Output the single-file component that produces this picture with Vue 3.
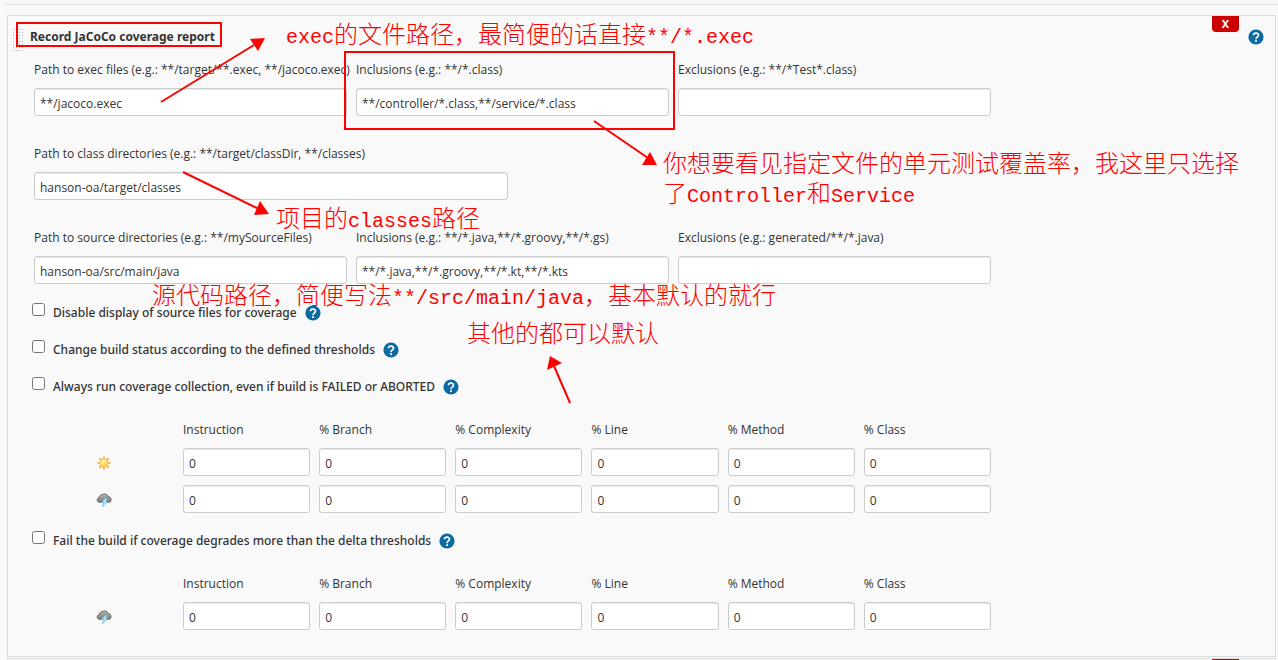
<script setup>
import { ref } from 'vue'

const fieldRows = ref([
  [
    { id: 'exec', label: 'Path to exec files (e.g.: **/target/**.exec, **/jacoco.exec)', value: '**/jacoco.exec' },
    { id: 'class-inc', label: 'Inclusions (e.g.: **/*.class)', value: '**/controller/*.class,**/service/*.class' },
    { id: 'class-exc', label: 'Exclusions (e.g.: **/*Test*.class)', value: '' },
  ],
  [
    { id: 'classes', label: 'Path to class directories (e.g.: **/target/classDir, **/classes)', value: 'hanson-oa/target/classes' },
  ],
  [
    { id: 'sources', label: 'Path to source directories (e.g.: **/mySourceFiles)', value: 'hanson-oa/src/main/java' },
    { id: 'src-inc', label: 'Inclusions (e.g.: **/*.java,**/*.groovy,**/*.gs)', value: '**/*.java,**/*.groovy,**/*.kt,**/*.kts' },
    { id: 'src-exc', label: 'Exclusions (e.g.: generated/**/*.java)', value: '' },
  ],
])

const columns = ['Instruction', '% Branch', '% Complexity', '% Line', '% Method', '% Class']

const zeros = () => columns.map(() => '0')

const groups = ref([
  {
    id: 'thresholds',
    checks: [
      { id: 'hide-sources', label: 'Disable display of source files for coverage', on: false },
      { id: 'build-status', label: 'Change build status according to the defined thresholds', on: false },
      { id: 'always-run', label: 'Always run coverage collection, even if build is FAILED or ABORTED', on: false },
    ],
    rows: [
      { icon: 'sun', values: zeros() },
      { icon: 'storm', values: zeros() },
    ],
  },
  {
    id: 'delta',
    checks: [
      { id: 'fail-delta', label: 'Fail the build if coverage degrades more than the delta thresholds', on: false },
    ],
    rows: [{ icon: 'storm', values: zeros() }],
  },
])

// Each note is a list of lines; each line is a list of [script, text] runs.
const notes = [
  { id: 'n-exec', lines: [[['en', 'exec'], ['zh', '的文件路径，最简便的话直接'], ['en', '**/*.exec']]] },
  { id: 'n-filter', lines: [
    [['zh', '你想要看见指定文件的单元测试覆盖率，我这里只选择']],
    [['zh', '了'], ['en', 'Controller'], ['zh', '和'], ['en', 'Service']],
  ] },
  { id: 'n-classes', lines: [[['zh', '项目的'], ['en', 'classes'], ['zh', '路径']]] },
  { id: 'n-source', lines: [[['zh', '源代码路径，简便写法'], ['en', '**/src/main/java'], ['zh', '，基本默认的就行']]] },
  { id: 'n-rest', lines: [[['zh', '其他的都可以默认']]] },
]
</script>

<template>
  <main class="page">
    <svg class="defs" width="0" height="0" aria-hidden="true">
      <defs>
        <radialGradient id="sunFill" cx="40%" cy="38%" r="65%">
          <stop offset="0" stop-color="#fff6b8" />
          <stop offset="1" stop-color="#fbc93a" />
        </radialGradient>
        <linearGradient id="cloudFill" x1="0" y1="0" x2="0" y2="1">
          <stop offset="0" stop-color="#b4b4b2" />
          <stop offset="1" stop-color="#7c7c7a" />
        </linearGradient>
        <symbol id="help" viewBox="0 0 16 16">
          <circle cx="8" cy="8" r="7.6" fill="#0b6aa2" />
          <path d="M5.500 6.300C5.500 3.300 10.500 3.300 10.500 6.200C10.500 7.900 8 8 8 10.200" fill="none" stroke="#fff" stroke-width="1.700" />
          <rect x="7.100" y="11.200" width="1.800" height="1.800" fill="#fff" />
        </symbol>
        <symbol id="sun" viewBox="0 0 16 16">
          <path d="M8 1.400V14.600M1.400 8H14.600M3.300 3.300L12.700 12.700M12.700 3.300L3.300 12.700" stroke="#f5a83c" stroke-width="1.700" />
          <circle cx="8" cy="8" r="4.300" fill="url(#sunFill)" stroke="#f7b545" stroke-width=".7" />
        </symbol>
        <symbol id="storm" viewBox="0 0 16 16">
          <path d="M3.200 10.200C.6 9.900.6 6.300 3 5.800C3.300 3.500 5.400 2.300 6.800 2.400C8.800 1.200 11.600 2.400 12 4.400C14.400 4.400 15.900 7.400 14.600 9.300C14 10.300 13 10.200 12.400 10.200Z" fill="url(#cloudFill)" stroke="#5c5c5a" stroke-width=".9" />
          <path d="M8.700 6.700L5.800 10.600H7.800L6.300 15L11.400 9.600H9.500L11.200 6.700Z" fill="#b4e6fd" stroke="#6cc4f4" stroke-width=".8" />
        </symbol>
      </defs>
    </svg>

    <section class="panel">
      <header class="head">
        <span class="grip"></span>
        <h2 class="title">Record JaCoCo coverage report</h2>
        <button class="remove" type="button" aria-label="Remove">X</button>
        <button class="help" type="button" aria-label="Help"><svg><use href="#help" /></svg></button>
      </header>

      <form class="body">
        <div
          v-for="(row, i) in fieldRows"
          :key="i"
          class="fields"
          :class="{ pair: row.length === 1 }"
        >
          <div v-for="f in row" :key="f.id" class="field">
            <label :for="f.id">{{ f.label }}</label>
            <input :id="f.id" v-model="f.value" class="box" type="text" />
          </div>
        </div>

        <div v-for="g in groups" :key="g.id" class="group">
          <div v-for="c in g.checks" :key="c.id" class="check">
            <input :id="c.id" v-model="c.on" class="tick" type="checkbox" />
            <label :for="c.id">{{ c.label }}</label>
            <button class="help" type="button" aria-label="Help"><svg><use href="#help" /></svg></button>
          </div>
          <table class="limits">
            <thead>
              <tr>
                <td class="state"></td>
                <th v-for="c in columns" :key="c" scope="col">{{ c }}</th>
              </tr>
            </thead>
            <tbody>
              <tr v-for="(r, ri) in g.rows" :key="ri">
                <td class="state"><svg><use :href="'#' + r.icon" /></svg></td>
                <td v-for="(c, ci) in columns" :key="c">
                  <input v-model="r.values[ci]" class="box" type="text" :aria-label="c" />
                </td>
              </tr>
            </tbody>
          </table>
        </div>
      </form>
    </section>

    <section class="panel">
      <header class="head">
        <button class="remove" type="button" aria-label="Remove"></button>
        <button class="help" type="button" aria-label="Help"><svg><use href="#help" /></svg></button>
      </header>
    </section>

    <svg class="marks" aria-hidden="true">
      <g fill="none" stroke="#fe0000" stroke-width="2">
        <rect x="17" y="23" width="204" height="23" />
        <rect x="345" y="52" width="329" height="77" />
        <path d="M161 102L254 45M594 121L648 158M183 172L259 209M570 403L554 366" />
      </g>
      <g fill="#fe0000">
        <path d="M265 38L250 39L258 51Z" />
        <path d="M657 165L650 152L642 165Z" />
        <path d="M269 214L260 201L254 215Z" />
        <path d="M550 356L547 370L562 363Z" />
      </g>
    </svg>

    <p v-for="n in notes" :key="n.id" class="note" :class="n.id">
      <span v-for="(line, li) in n.lines" :key="li" class="line"><span v-for="(run, ri) in line" :key="ri" :class="run[0]">{{ run[1] }}</span></span>
    </p>
  </main>
</template>

<style>
body {
  margin: 0;
  background: #f9f9f9;
}
</style>

<style scoped>
.page {
  position: relative;
  box-sizing: border-box;
  height: 100vh;
  overflow: hidden;
  padding: 4px 2px 0 7px;
  background: #f9f9f9;
  color: #333;
  font: 12px/18px "Open Sans", "Noto Sans", sans-serif;
}
.page::before {
  content: "";
  display: block;
  height: 1px;
  margin: 0 -2px 10px;
  background: #dcdcdc;
}
.defs {
  position: absolute;
}
.panel {
  border: 1px solid #dcdcdc;
  margin-bottom: 1px;
}
.head {
  display: flex;
  align-items: flex-start;
  height: 45px;
  padding: 0 11px 0 4px;
}
.grip {
  width: 12px;
  height: 24px;
  margin: 12px 6px 0 0;
  background: radial-gradient(circle, #b8b8b8 1px, transparent 1px) 0 0 / 3px 3px;
}
.title {
  flex: 1;
  margin: 12px 0 0;
  font: bold 12px/18px "Noto Sans", sans-serif;
}
.remove {
  width: 27px;
  height: 16px;
  margin-left: auto;
  padding: 0;
  border: 0;
  border-radius: 0 0 4px 4px;
  background: #c00;
  color: #fff;
  font: bold 11px/14px "Noto Sans", sans-serif;
}
.help {
  width: 16px;
  height: 16px;
  padding: 0;
  border: 0;
  background: none;
}
.head .help {
  margin: 13px 0 0 9px;
}
svg {
  display: block;
  width: 16px;
  height: 16px;
}
.body {
  margin: 0 284px 22px 26px;
}
.fields {
  display: grid;
  grid-template-columns: repeat(3, 1fr);
  gap: 9px;
  margin-bottom: 29px;
}
.fields.pair {
  grid-template-columns: repeat(2, 1fr);
}
.fields:nth-child(3) {
  margin-bottom: 10px;
}
.field {
  display: flex;
  flex-direction: column;
  gap: 9px;
  min-width: 0;
  white-space: nowrap;
}
.box {
  box-sizing: border-box;
  display: block;
  width: 100%;
  height: 28px;
  padding: 2px 5px 0;
  border: 1px solid #ccc;
  border-radius: 3px;
  background: #fff;
  box-shadow: inset 0 1px 1px rgba(0, 0, 0, 0.08);
  color: #333;
  font: 12px/18px "Open Sans", "Noto Sans", sans-serif;
}
.group + .group {
  margin-top: 5px;
}
.check {
  display: flex;
  align-items: center;
  height: 37px;
}
.check label {
  font: 500 12px/18px "Noto Sans", sans-serif;
}
.tick {
  align-self: flex-start;
  width: 13px;
  height: 13px;
  margin: 9px 8px 0 -2px;
}
.check .help {
  margin-left: 8px;
}
.limits {
  width: 100%;
  margin-top: 10px;
  table-layout: fixed;
  border-collapse: collapse;
}
th {
  height: 28px;
  box-sizing: border-box;
  padding: 2px 0 0 9px;
  font-weight: normal;
  text-align: left;
}
.limits td {
  padding: 5px 0 4px 9px;
}
.limits .state {
  width: 140px;
  padding: 2px 0 0;
}
.state svg {
  margin: 0 auto;
}
.marks {
  position: absolute;
  inset: 0;
  width: 100%;
  height: 100%;
  pointer-events: none;
}
.note {
  position: absolute;
  margin: 0;
  color: #fe0000;
  font-family: "Noto Sans CJK SC", sans-serif;
  font-size: 24px;
  font-weight: 300;
  line-height: 30px;
  white-space: nowrap;
  pointer-events: none;
}
.line {
  display: block;
}
.en {
  font-family: "Liberation Mono", monospace;
  font-size: 20px;
}
.n-exec {
  left: 286px;
  top: 18px;
}
.n-filter {
  left: 663px;
  top: 147px;
}
.n-classes {
  left: 276px;
  top: 202px;
}
.n-source {
  left: 152px;
  top: 279px;
}
.n-rest {
  left: 467px;
  top: 317px;
}
</style>
